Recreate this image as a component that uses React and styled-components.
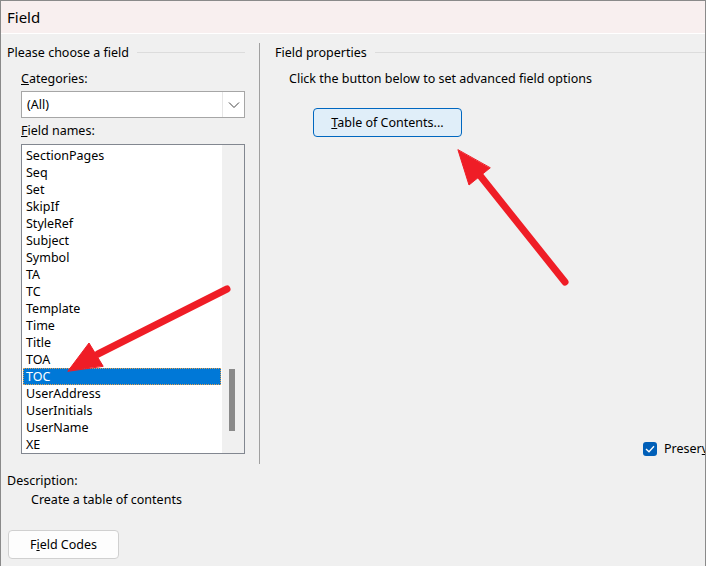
import styled, { createGlobalStyle } from 'styled-components';

const GlobalStyle = createGlobalStyle`
  html, body {
    margin: 0;
    padding: 0;
    background: #f0f0f0;
  }
  body {
    font-family: "Segoe UI", "Noto Sans", "Open Sans", sans-serif;
    font-size: 12.5px;
    color: #000;
  }
`;

const fieldNames = [
  'SectionPages', 'Seq', 'Set', 'SkipIf', 'StyleRef', 'Subject', 'Symbol',
  'TA', 'TC', 'Template', 'Time', 'Title', 'TOA', 'TOC', 'UserAddress',
  'UserInitials', 'UserName', 'XE',
];

const App = () => {
  return (
    <>
      <GlobalStyle />
      <Window>
        <TitleBar>Field</TitleBar>
        <Body>
          <TopRow>
            <LeftPanel>
              <GroupHeader $lineEnd={14}>Please choose a field</GroupHeader>
              <Inner>
                <Label $top={9} $bottom={3}><u>C</u>ategories:</Label>
                <Combo>
                  <ComboValue>(All)</ComboValue>
                  <ComboButton>
                    <svg width="12" height="8" viewBox="0 0 12 8">
                      <path d="M1 1.5 L6 6.5 L11 1.5" fill="none" stroke="#444" strokeWidth="1" />
                    </svg>
                  </ComboButton>
                </Combo>
                <Label $top={4} $bottom={4}><u>F</u>ield names:</Label>
                <ListBox>
                  <ListItems>
                    {fieldNames.map(name => (
                      <Item key={name} $selected={name === 'TOC'}>{name}</Item>
                    ))}
                  </ListItems>
                  <ScrollTrack>
                    <Thumb />
                  </ScrollTrack>
                </ListBox>
              </Inner>
            </LeftPanel>
            <RightPanel>
              <GroupHeader $lineEnd={0}>Field properties</GroupHeader>
              <Hint>Click the button below to set advanced field options</Hint>
              <BlueButton><u>T</u>able of Contents...</BlueButton>
              <CheckRow>
                <CheckBox>
                  <svg width="10" height="8" viewBox="0 0 10 8">
                    <path d="M1 4 L4 6.8 L9 1.2" fill="none" stroke="#fff" strokeWidth="1.3" />
                  </svg>
                </CheckBox>
                <span>Preser<u>v</u>e formatting during updates</span>
              </CheckRow>
            </RightPanel>
          </TopRow>
          <Bottom>
            <Label $top={8} $bottom={0}>Description:</Label>
            <DescText>Create a table of contents</DescText>
            <PlainButton>F<u>i</u>eld Codes</PlainButton>
          </Bottom>
        </Body>
        <Arrows width="706" height="566" viewBox="0 0 706 566">
          <g fill="#ef1d26" stroke="#ef1d26" strokeLinecap="round" strokeLinejoin="round">
            <line x1="227" y1="289" x2="98" y2="354" strokeWidth="7" />
            <polygon points="68,371 89,343 103,366" strokeWidth="1" />
            <line x1="565" y1="282" x2="478" y2="173" strokeWidth="7" />
            <polygon points="458,150 469,185 490,168" strokeWidth="1" />
          </g>
        </Arrows>
      </Window>
    </>
  );
};

export default App;

const Window = styled.div`
  position: relative;
  width: 706px;
  height: 566px;
  box-sizing: border-box;
  border-top: 1px solid #8a8a8a;
  border-left: 1px solid #8a8a8a;
  border-right: 1px solid #8a8a8a;
  overflow: hidden;
  display: flex;
  flex-direction: column;
  background: #f0f0f0;
`;

const TitleBar = styled.div`
  height: 33px;
  flex: none;
  box-sizing: border-box;
  padding-left: 6px;
  display: flex;
  align-items: center;
  background: #f8efef;
  border-bottom: 1px solid #ffffff;
  font-size: 15px;
`;

const Body = styled.div`
  flex: 1;
  display: flex;
  flex-direction: column;
  padding-top: 9px;
`;

const TopRow = styled.div`
  display: flex;
  height: 421px;
  flex: none;
`;

const LeftPanel = styled.div`
  flex: none;
  width: 252px;
  border-right: 1px solid #a0a0a0;
  padding-left: 6px;
  display: flex;
  flex-direction: column;
`;

const GroupHeader = styled.div`
  display: flex;
  align-items: center;
  gap: 8px;
  height: 18px;
  white-space: nowrap;
  margin-right: ${p => p.$lineEnd}px;
  &::after {
    content: '';
    flex: 1;
    height: 1px;
    background: #dcdcdc;
  }
`;

const Inner = styled.div`
  padding-left: 14px;
  width: 224px;
  display: flex;
  flex-direction: column;
`;

const Label = styled.div`
  margin-top: ${p => p.$top}px;
  margin-bottom: ${p => p.$bottom}px;
  height: 18px;
  line-height: 18px;
`;

const Combo = styled.div`
  height: 27px;
  box-sizing: border-box;
  border: 1px solid #a6a6a6;
  background: #fff;
  display: flex;
`;

const ComboValue = styled.div`
  flex: 1;
  padding-left: 5px;
  display: flex;
  align-items: center;
`;

const ComboButton = styled.div`
  width: 21px;
  border-left: 1px solid #e6e6e6;
  display: flex;
  align-items: center;
  justify-content: center;
`;

const ListBox = styled.div`
  height: 310px;
  box-sizing: border-box;
  border: 1px solid #828790;
  background: #fff;
  display: flex;
`;

const ListItems = styled.div`
  flex: 1;
  padding: 2px 1px 0;
  overflow: hidden;
`;

const Item = styled.div`
  height: 17px;
  line-height: 17px;
  padding-left: 3px;
  box-sizing: border-box;
  background: ${p => (p.$selected ? '#0078d7' : 'transparent')};
  color: ${p => (p.$selected ? '#fff' : '#000')};
  outline: ${p => (p.$selected ? '1px dotted #e0a050' : 'none')};
  outline-offset: -1px;
`;

const ScrollTrack = styled.div`
  width: 22px;
  background: #f0f0f0;
  position: relative;
`;

const Thumb = styled.div`
  position: absolute;
  left: 7px;
  top: 224px;
  width: 6px;
  height: 62px;
  background: #8a8a8a;
`;

const RightPanel = styled.div`
  flex: 1;
  min-width: 0;
  padding-left: 15px;
  display: flex;
  flex-direction: column;
`;

const Hint = styled.div`
  margin-top: 9px;
  padding-left: 14px;
  height: 18px;
  line-height: 18px;
  white-space: nowrap;
`;

const BlueButton = styled.button`
  margin-top: 20px;
  margin-left: 38px;
  width: 149px;
  height: 29px;
  border: 1px solid #0067c0;
  border-radius: 4px;
  background: #e0eef9;
  font: inherit;
  color: #000;
  padding: 0;
`;

const CheckRow = styled.div`
  margin-top: auto;
  margin-bottom: 7px;
  padding-left: 368px;
  display: flex;
  align-items: center;
  gap: 7px;
  white-space: nowrap;
`;

const CheckBox = styled.span`
  width: 14px;
  height: 14px;
  border-radius: 3px;
  background: #005fb8;
  display: flex;
  align-items: center;
  justify-content: center;
  flex: none;
`;

const Bottom = styled.div`
  padding-left: 6px;
  display: flex;
  flex-direction: column;
  align-items: flex-start;
`;

const DescText = styled.div`
  padding-left: 24px;
  margin-top: 1px;
  height: 18px;
  line-height: 18px;
`;

const PlainButton = styled.button`
  margin-top: 21px;
  margin-left: 1px;
  width: 111px;
  height: 29px;
  border: 1px solid #d0d0d0;
  border-radius: 4px;
  background: #fdfdfd;
  font: inherit;
  color: #000;
  padding: 0;
`;

const Arrows = styled.svg`
  position: absolute;
  left: -1px;
  top: -1px;
  pointer-events: none;
`;
